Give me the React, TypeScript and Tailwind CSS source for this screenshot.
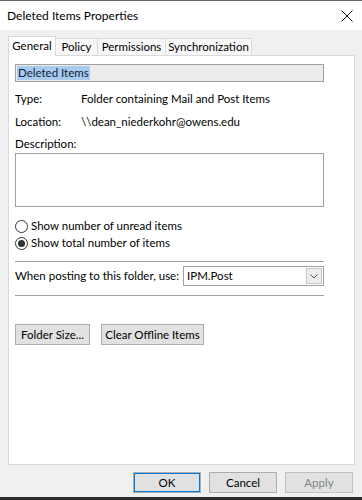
const font = { fontFamily: 'Lato, "Noto Sans", sans-serif' };

const Radio = ({ checked, label }: { checked: boolean; label: string }) => (
  <div className="flex h-[16px] items-center">
    <span className="flex h-[13px] w-[13px] items-center justify-center rounded-full border border-[#333] bg-white">
      {checked && <span className="h-[7px] w-[7px] rounded-full bg-[#333]" />}
    </span>
    <span className="ml-[3px]">{label}</span>
  </div>
);

const Btn = ({ label, className }: { label: string; className?: string }) => (
  <div
    className={`flex h-[21px] items-center justify-center whitespace-nowrap border border-[#adadad] bg-[#e1e1e1] ${className ?? ""}`}
  >
    {label}
  </div>
);

export default function App() {
  const tabs = [
    { name: "Policy", w: "w-[43px]" },
    { name: "Permissions", w: "w-[69px]" },
    { name: "Synchronization", w: "w-[87px]" },
  ];
  return (
    <div
      className="flex h-[500px] w-[362px] flex-col overflow-hidden whitespace-nowrap border-t border-[#6b6b6b] text-[11.5px] leading-[16px] text-black"
      style={font}
    >
      <div className="flex h-[29px] shrink-0 items-center justify-between bg-white pl-[7px] pr-[9px]">
        <span className="text-[12px]">Deleted Items Properties</span>
        <svg width="12" height="12" viewBox="0 0 12 12" stroke="#111" strokeWidth="1">
          <path d="M0.5 0.5 L11.5 11.5 M11.5 0.5 L0.5 11.5" />
        </svg>
      </div>

      <div className="flex flex-1 flex-col bg-[#f0f0f0] px-[8px] pt-[5px]">
        <div className="flex h-[20px] items-end">
          <div className="relative z-10 -mb-px flex h-[20px] w-[48px] items-center justify-center border border-b-0 border-[#d9d9d9] bg-white pb-[2px]">
            General
          </div>
          {tabs.map((t) => (
            <div
              key={t.name}
              className={`-ml-px flex h-[17px] items-center justify-center border border-b-0 border-[#d9d9d9] bg-[#f7f7f7] first:ml-0 ${t.w}`}
            >
              {t.name}
            </div>
          ))}
        </div>

        <div className="h-[410px] w-[347px] border border-[#d9d9d9] bg-white pl-[6px] pt-[8px]">
          <div className="flex w-[309px] flex-col">
            <div className="flex h-[18px] items-center border border-[#a0a0a0] bg-[#ececec] pl-[1px]">
              <span className="bg-[#a9cbee] px-[1px] leading-[14px] text-[#0b1e3a]">Deleted Items</span>
            </div>

            <div className="mt-[9px] flex">
              <span className="w-[66px]">Type:</span>
              <span>Folder containing Mail and Post Items</span>
            </div>
            <div className="mt-[7px] flex">
              <span className="w-[66px]">Location:</span>
              <span>\\dean_niederkohr@owens.edu</span>
            </div>
            <div className="mt-[6px]">Description:</div>
            <div className="mt-px h-[54px] border border-[#a0a0a0] bg-white" />

            <div className="mt-[11px]">
              <Radio checked={false} label="Show number of unread items" />
            </div>
            <div className="mt-px">
              <Radio checked label="Show total number of items" />
            </div>

            <div className="mt-[10px] h-px bg-[#a0a0a0]" />

            <div className="mt-[4px] flex items-center">
              <span className="flex-1">When posting to this folder, use:</span>
              <div className="flex h-[20px] w-[141px] items-center justify-between border border-[#a0a0a0] bg-white pl-[3px]">
                <span>IPM.Post</span>
                <span className="mr-px flex h-[16px] w-[16px] items-center justify-center border border-[#c8c8c8] bg-[#ececec]">
                  <svg width="8" height="5" viewBox="0 0 8 5" fill="none" stroke="#555" strokeWidth="1">
                    <path d="M0.5 0.5 L4 4 L7.5 0.5" />
                  </svg>
                </span>
              </div>
            </div>

            <div className="mt-[9px] h-px bg-[#a0a0a0]" />

            <div className="mt-[28px] flex gap-[11px]">
              <Btn label="Folder Size..." className="w-[75px]" />
              <Btn label="Clear Offline Items" className="w-[103px]" />
            </div>
          </div>
        </div>

        <div className="mt-[7px] flex justify-end gap-[8px] pr-px">
          <Btn label="OK" className="w-[68px] border-[#0078d7] outline outline-1 -outline-offset-2 outline-[#0078d7]" />
          <Btn label="Cancel" className="w-[68px]" />
          <Btn label="Apply" className="w-[68px] border-[#bfbfbf] bg-[#cccccc] text-[#838383]" />
        </div>
      </div>
      <div className="h-[3px] shrink-0 bg-[#2b2b2b]" />
    </div>
  );
}
